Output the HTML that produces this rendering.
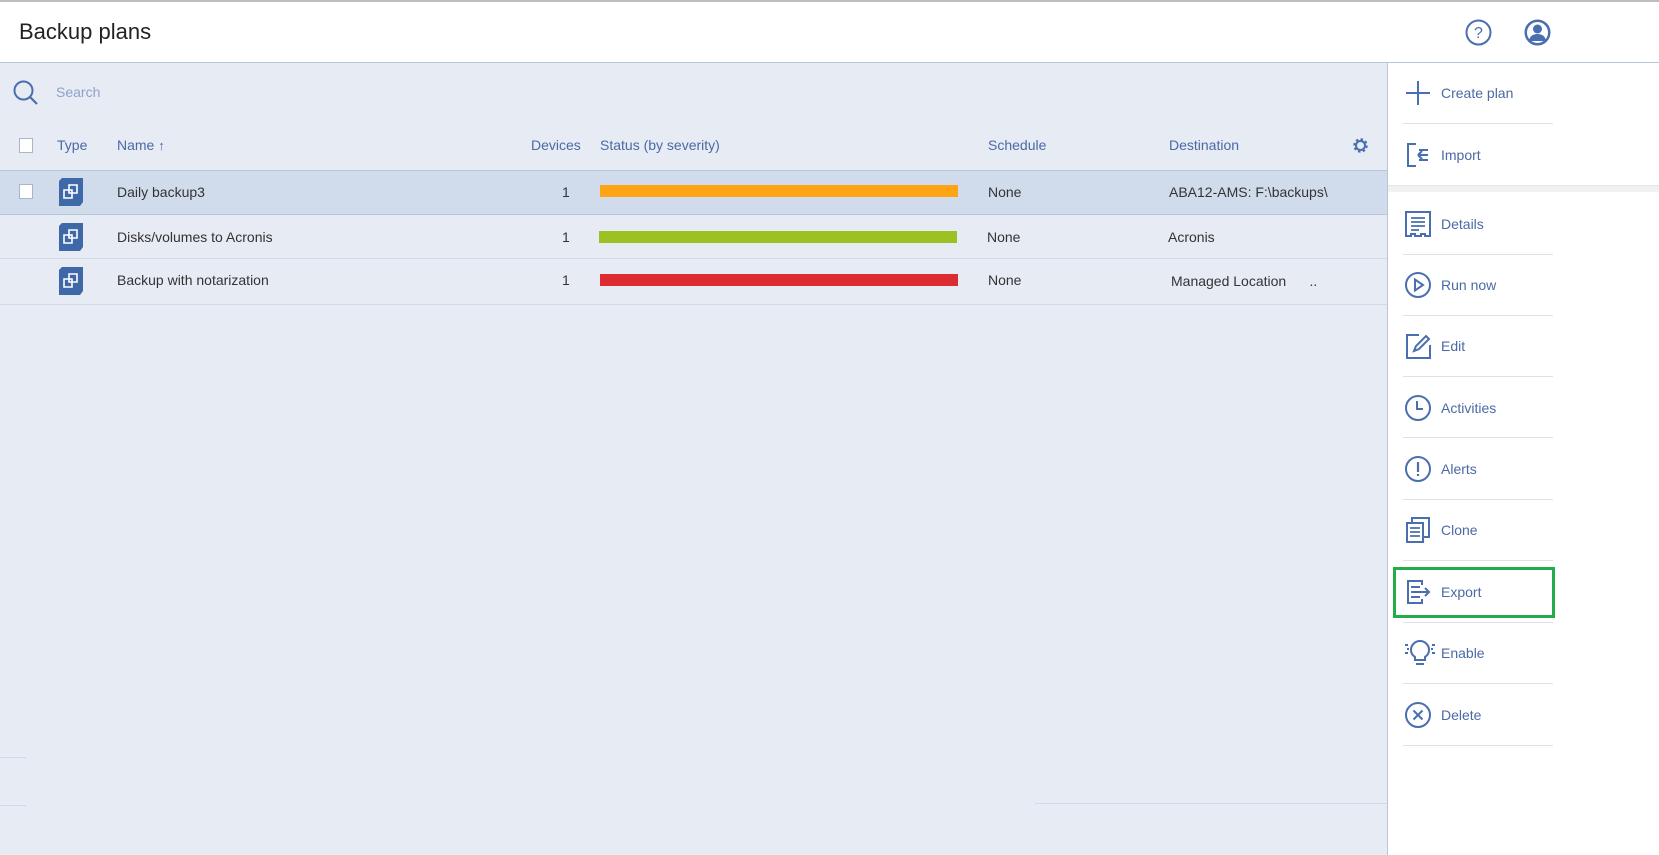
<!DOCTYPE html>
<html><head><meta charset="utf-8"><style>
*{margin:0;padding:0;box-sizing:border-box}
body{width:1659px;height:855px;overflow:hidden;background:#e7ebf4;font-family:"Liberation Sans",sans-serif;position:relative;color:#333}
.abs{position:absolute}
.hdr{left:0;top:0;width:1659px;height:63px;background:#fff;border-top:2px solid #bdbdbd;border-bottom:1px solid #b8c6dc}
.t{font-size:14px;white-space:nowrap}
.side{left:1387px;top:63px;width:272px;height:792px;background:#fff;border-left:1px solid #b8c6dc}
.item{position:absolute;left:1403px;width:150px;height:61px}
.item .lbl{position:absolute;left:38px;top:50%;transform:translateY(-50%);font-size:14px;color:#4a6aa5}
.item svg{position:absolute;left:2px;top:50%;transform:translateY(-50%)}
.sep{position:absolute;left:1403px;width:150px;height:1px;background:#dde1e8}
.cb{position:absolute;width:14px;height:15px;background:#fff;border:1px solid #a9b5c8}
.ti{position:absolute;width:24px;height:28px}
.hd{color:#4a6aa5}
</style></head><body>
<div class="abs hdr"></div>
<div class="abs" style="left:19px;top:19px;font-size:22px;color:#222">Backup plans</div>
<svg class="abs" style="left:1465px;top:19px" width="27" height="27" viewBox="0 0 27 27"><circle cx="13.5" cy="13.5" r="12" fill="none" stroke="#4a6fae" stroke-width="2"/><text x="13.5" y="19" text-anchor="middle" font-size="16" fill="#4a6fae" font-family="Liberation Sans">?</text></svg>
<svg class="abs" style="left:1524px;top:19px" width="27" height="27" viewBox="0 0 27 27"><circle cx="13.5" cy="13.5" r="12" fill="none" stroke="#4a6fae" stroke-width="2"/><circle cx="13.5" cy="10" r="4.5" fill="#4a6fae"/><path d="M5 22 Q6 15 13.5 15 Q21 15 22 22 Z" fill="#4a6fae"/><circle cx="13.5" cy="13.5" r="11" fill="none" stroke="#4a6fae" stroke-width="1"/></svg>

<svg class="abs" style="left:13px;top:80px" width="26" height="26" viewBox="0 0 26 26"><circle cx="10.5" cy="10.5" r="9" fill="none" stroke="#4a6fae" stroke-width="2"/><path d="M17 17 L24 24" stroke="#4a6fae" stroke-width="2.2"/></svg>
<div class="abs t" style="left:56px;top:84px;color:#8fa3c8">Search</div>

<div class="cb" style="left:19px;top:138px"></div>
<div class="abs t hd" style="left:57px;top:137px">Type</div>
<div class="abs t hd" style="left:117px;top:137px">Name <b style="font-size:13px">↑</b></div>
<div class="abs t hd" style="left:531px;top:137px">Devices</div>
<div class="abs t hd" style="left:600px;top:137px">Status (by severity)</div>
<div class="abs t hd" style="left:988px;top:137px">Schedule</div>
<div class="abs t hd" style="left:1169px;top:137px">Destination</div>
<svg class="abs" style="left:1352px;top:137px" width="17" height="17" viewBox="0 0 17 17"><circle cx="8.5" cy="8.5" r="5.5" fill="none" stroke="#4a6fae" stroke-width="3.5" stroke-dasharray="2.2 2.1"/><circle cx="8.5" cy="8.5" r="4.5" fill="none" stroke="#4a6fae" stroke-width="2"/></svg>

<div class="abs" style="left:0;top:170px;width:1387px;height:45px;background:#d0dcec;border-top:1px solid #b8c6dc;border-bottom:1px solid #b8c6dc"></div>
<div class="abs" style="left:0;top:258px;width:1387px;height:1px;background:#cfd9e8"></div>
<div class="abs" style="left:0;top:304px;width:1387px;height:1px;background:#cfd9e8"></div>
<div class="abs" style="left:0;top:757px;width:26px;height:1px;background:#cfd9e8"></div>
<div class="abs" style="left:0;top:805px;width:26px;height:1px;background:#cfd9e8"></div>
<div class="abs" style="left:1035px;top:803px;width:352px;height:1px;background:#cfd9e8"></div>

<div class="cb" style="left:19px;top:184px"></div>
<svg class="ti" style="left:59px;top:178px" viewBox="0 0 24 28"><path d="M3 0 H24 V24 L21 28 H0 V3 Z" fill="#3f68a8"/><path d="M10 7h8v8h-8zM5 12h8v8h-8z" fill="none" stroke="#fff" stroke-width="1.6"/></svg>
<svg class="ti" style="left:59px;top:223px" viewBox="0 0 24 28"><path d="M3 0 H24 V24 L21 28 H0 V3 Z" fill="#3f68a8"/><path d="M10 7h8v8h-8zM5 12h8v8h-8z" fill="none" stroke="#fff" stroke-width="1.6"/></svg>
<svg class="ti" style="left:59px;top:267px" viewBox="0 0 24 28"><path d="M3 0 H24 V24 L21 28 H0 V3 Z" fill="#3f68a8"/><path d="M10 7h8v8h-8zM5 12h8v8h-8z" fill="none" stroke="#fff" stroke-width="1.6"/></svg>

<div class="abs t" style="left:117px;top:184px">Daily backup3</div>
<div class="abs t" style="left:117px;top:229px">Disks/volumes to Acronis</div>
<div class="abs t" style="left:117px;top:272px">Backup with notarization</div>
<div class="abs t" style="left:562px;top:184px">1</div>
<div class="abs t" style="left:562px;top:229px">1</div>
<div class="abs t" style="left:562px;top:272px">1</div>
<div class="abs" style="left:600px;top:185px;width:358px;height:12px;background:#ffa412"></div>
<div class="abs" style="left:599px;top:231px;width:358px;height:12px;background:#9bc123"></div>
<div class="abs" style="left:600px;top:274px;width:358px;height:12px;background:#dc2b31"></div>
<div class="abs t" style="left:988px;top:184px">None</div>
<div class="abs t" style="left:987px;top:229px">None</div>
<div class="abs t" style="left:988px;top:272px">None</div>
<div class="abs t" style="left:1169px;top:184px">ABA12-AMS: F:\backups\</div>
<div class="abs t" style="left:1168px;top:229px">Acronis</div>
<div class="abs t" style="left:1171px;top:273px">Managed Location &nbsp;&nbsp;&nbsp;&nbsp;&nbsp;..</div>

<div class="abs side"></div>
<div class="abs" style="left:1388px;top:185px;width:271px;height:7px;background:#f0f1f3;border-top:1px solid #e2e4e8"></div>

<div class="item" style="top:62px"><svg width="26" height="26" viewBox="0 0 26 26"><path d="M13 1v24M1 13h24" stroke="#4a6fae" stroke-width="2"/></svg><span class="lbl">Create plan</span></div>
<div class="sep" style="top:123px"></div>
<div class="item" style="top:124px"><svg width="26" height="26" viewBox="0 0 26 26"><path d="M11 2H3v22h8M14 8h9M14 13h9M14 18h9M13 13l4-4M13 13l4 4" fill="none" stroke="#4a6fae" stroke-width="2"/></svg><span class="lbl">Import</span></div>

<div class="item" style="top:193px"><svg width="26" height="26" viewBox="0 0 26 26"><path d="M1 1h24v24h-5v-2h-4v2h-6v-2h-4v2H1z" fill="none" stroke="#4a6fae" stroke-width="2"/><path d="M6 7h14M6 11h14M6 15h14M6 19h8" stroke="#4a6fae" stroke-width="1.8"/></svg><span class="lbl">Details</span></div>
<div class="sep" style="top:254px"></div>
<div class="item" style="top:254px"><svg width="26" height="26" viewBox="0 0 26 26"><circle cx="13" cy="13" r="12" fill="none" stroke="#4a6fae" stroke-width="2"/><path d="M10 7.5v11l8-5.5z" fill="none" stroke="#4a6fae" stroke-width="2"/></svg><span class="lbl">Run now</span></div>
<div class="sep" style="top:315px"></div>
<div class="item" style="top:315px"><svg width="26" height="26" viewBox="0 0 26 26"><path d="M14 2H2v23h23V12" fill="none" stroke="#4a6fae" stroke-width="2"/><path d="M9 18l2-5L21 3l3 3-10 10z" fill="none" stroke="#4a6fae" stroke-width="2"/></svg><span class="lbl">Edit</span></div>
<div class="sep" style="top:376px"></div>
<div class="item" style="top:377px"><svg width="26" height="26" viewBox="0 0 26 26"><circle cx="13" cy="13" r="12" fill="none" stroke="#4a6fae" stroke-width="2"/><path d="M12 6v8h6" fill="none" stroke="#4a6fae" stroke-width="2"/></svg><span class="lbl">Activities</span></div>
<div class="sep" style="top:437px"></div>
<div class="item" style="top:438px"><svg width="26" height="26" viewBox="0 0 26 26"><circle cx="13" cy="13" r="12" fill="none" stroke="#4a6fae" stroke-width="2"/><path d="M13 6v10M13 18v2" stroke="#4a6fae" stroke-width="2.2"/></svg><span class="lbl">Alerts</span></div>
<div class="sep" style="top:499px"></div>
<div class="item" style="top:499px"><svg width="26" height="26" viewBox="0 0 26 26"><path d="M7 5V1h17v19h-5" fill="none" stroke="#4a6fae" stroke-width="2"/><path d="M2 6h16v19H2z" fill="none" stroke="#4a6fae" stroke-width="2"/><path d="M5 11h10M5 15h10M5 19h10" stroke="#4a6fae" stroke-width="1.8"/></svg><span class="lbl">Clone</span></div>
<div class="sep" style="top:560px"></div>
<div class="abs" style="left:1393px;top:567px;width:162px;height:51px;border:3px solid #22ad4a"></div>
<div class="item" style="top:561px"><svg width="26" height="26" viewBox="0 0 26 26"><path d="M17 6V2H3v22h14v-4" fill="none" stroke="#4a6fae" stroke-width="2"/><path d="M6 8h9M6 13h18M6 18h9M20 9l4 4-4 4" fill="none" stroke="#4a6fae" stroke-width="2"/></svg><span class="lbl">Export</span></div>
<div class="sep" style="top:622px"></div>
<div class="item" style="top:622px"><svg width="30" height="26" viewBox="0 0 30 26"><path d="M10 17c-3-2-4-4-4-7a9 9 0 0 1 18 0c0 3-1 5-4 7v3H10z" fill="none" stroke="#4a6fae" stroke-width="2"/><path d="M11 24h8M0 5h3M0 13h3M27 5h3M27 13h3M2 9h2M26 9h2" stroke="#4a6fae" stroke-width="2"/></svg><span class="lbl">Enable</span></div>
<div class="sep" style="top:683px"></div>
<div class="item" style="top:684px"><svg width="26" height="26" viewBox="0 0 26 26"><circle cx="13" cy="13" r="12" fill="none" stroke="#4a6fae" stroke-width="2"/><path d="M8.5 8.5l9 9M17.5 8.5l-9 9" stroke="#4a6fae" stroke-width="2"/></svg><span class="lbl">Delete</span></div>
<div class="sep" style="top:745px"></div>
</body></html>
